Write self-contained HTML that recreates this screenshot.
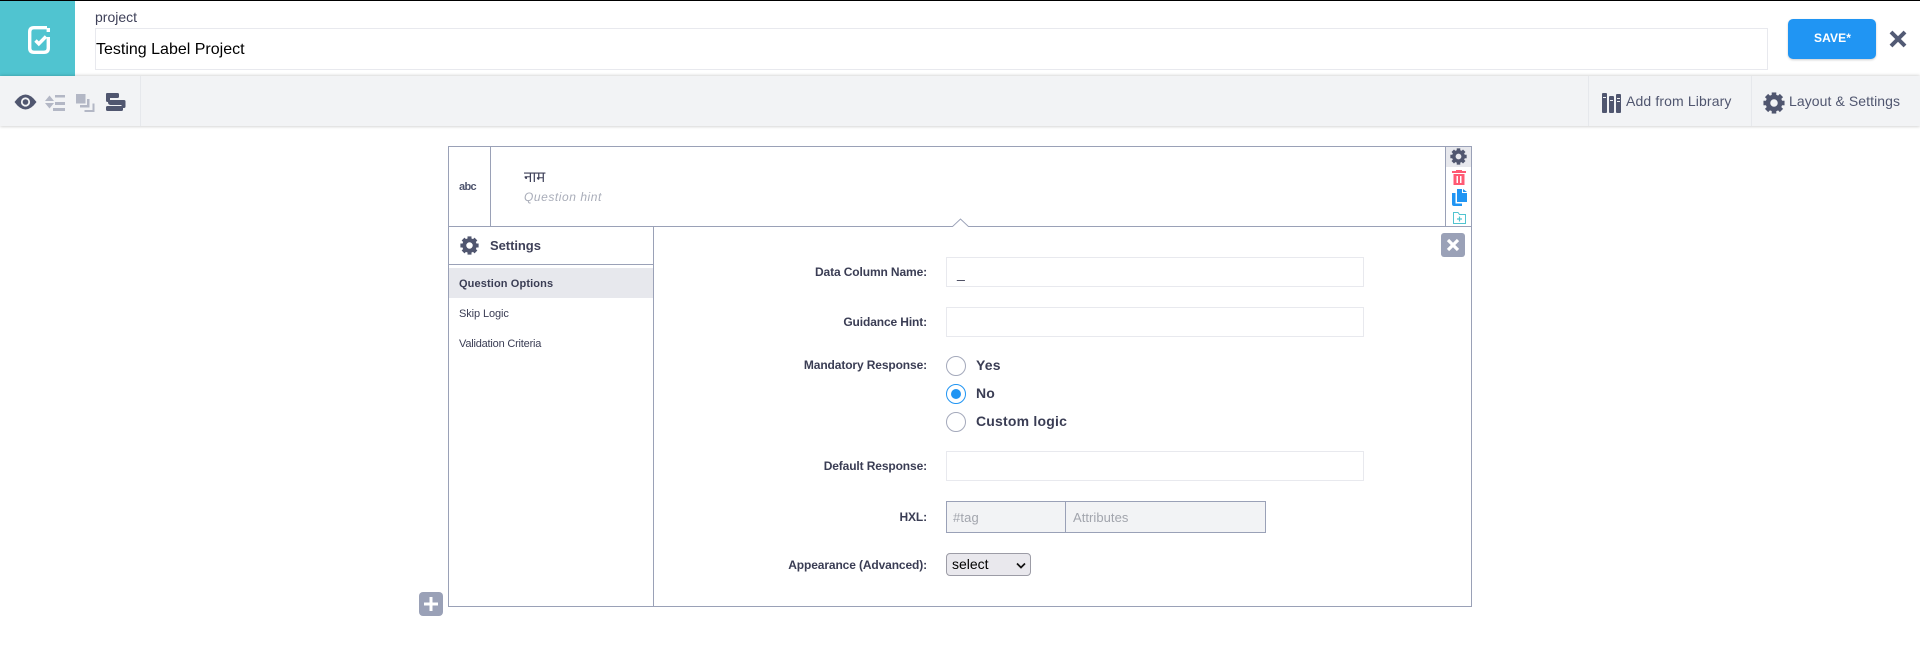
<!DOCTYPE html>
<html><head><meta charset="utf-8"><title>project</title>
<style>
html,body{margin:0;padding:0;background:#fff;width:1920px;height:653px;overflow:hidden;font-family:"Liberation Sans",Arial,sans-serif;color:#3d3f55}
.a{position:absolute;box-sizing:border-box}
.t{position:absolute;white-space:nowrap}
.lb{position:absolute;right:993px;text-align:right;font-size:12px;font-weight:bold;color:#3a3d54;white-space:nowrap;line-height:14px;letter-spacing:-.12px}
.in{position:absolute;left:946px;width:418px;height:30px;border:1px solid #e8e9ee;box-sizing:border-box;background:#fff}
.r{position:absolute;left:946px;width:20px;height:20px;border:1px solid #a4a9bb;border-radius:50%;box-sizing:border-box;background:#fff}
.rl{position:absolute;left:976px;font-size:14px;font-weight:bold;color:#3a3d54;line-height:16px;white-space:nowrap;letter-spacing:.2px}
svg{position:absolute;display:block}
</style></head><body>
<svg width="0" height="0" style="position:absolute"><defs>
<g id="gear"><circle cx="12" cy="12" r="6.6" fill="none" stroke="currentColor" stroke-width="5"/>
<g fill="currentColor"><rect x="9.5" y="0.5" width="5" height="4"/><rect x="9.5" y="19.5" width="5" height="4"/><rect x="0.5" y="9.5" width="4" height="5"/><rect x="19.5" y="9.5" width="4" height="5"/><rect x="9.5" y="0.5" width="5" height="4" transform="rotate(45 12 12)"/><rect x="9.5" y="19.5" width="5" height="4" transform="rotate(45 12 12)"/><rect x="0.5" y="9.5" width="4" height="5" transform="rotate(45 12 12)"/><rect x="19.5" y="9.5" width="4" height="5" transform="rotate(45 12 12)"/></g></g>
</defs></svg>

<div class="a" style="left:0;top:0;width:1920px;height:1px;background:#000"></div>
<div class="a" style="left:0;top:1px;width:75px;height:75px;background:#50c4d0"></div>
<svg style="left:27px;top:25px" width="24" height="30" viewBox="0 0 24 30" fill="none" stroke="#fff" stroke-width="3.4"><path d="M20 2.700H7Q2.700 2.700 2.700 7V23Q2.700 27.300 7 27.300H17Q21.300 27.300 21.300 23V12"/><path d="M21.300 3V7"/><path d="M8.500 15.500L11.800 18.800L19 11.500"/></svg>
<div class="t" style="left:95px;top:9px;font-size:14px;line-height:16px;color:#3f4159">project</div>
<div class="a" style="left:95px;top:28px;width:1673px;height:42px;border:1px solid #e8e9ee;background:#fff"></div>
<div class="t" style="left:96px;top:40px;font-size:16px;line-height:19px;color:#000">Testing Label Project</div>
<div class="a" style="left:1788px;top:19px;width:88px;height:40px;background:#2095f3;border-radius:5px;box-shadow:0 1px 2px rgba(0,0,0,.2);color:#fff;font-size:12px;font-weight:bold;text-align:center;line-height:38px;letter-spacing:.1px;padding-left:1px">SAVE*</div>
<svg style="left:1888px;top:29px" width="20" height="20" viewBox="0 0 20 20"><path d="M3 3L17 17M17 3L3 17" stroke="#525a74" stroke-width="4" fill="none"/></svg>

<div class="a" style="left:0;top:76px;width:1920px;height:50px;background:#f2f3f5;box-shadow:0 1px 3px rgba(0,0,0,.14),0 -1px 3px rgba(0,0,0,.12)"></div>
<div class="a" style="left:140px;top:76px;width:1px;height:50px;background:#e6e8ec"></div>
<div class="a" style="left:1588px;top:76px;width:1px;height:50px;background:#e6e8ec"></div>
<div class="a" style="left:1751px;top:76px;width:1px;height:50px;background:#e6e8ec"></div>
<svg style="left:14px;top:94px" width="23" height="16" viewBox="0 0 23 16"><path d="M0.5 8Q6 0.5 11.5 0.5T22.5 8Q17 15.5 11.5 15.5T0.5 8Z" fill="#50566f"/><circle cx="11.5" cy="8" r="4.6" fill="#f2f3f5"/><circle cx="11.5" cy="8" r="2.8" fill="#50566f"/></svg>
<svg style="left:45px;top:95px" width="21" height="16" viewBox="0 0 21 16" fill="#b3b7c5"><path d="M0 6L4.500 0.500L9 6Z"/><path d="M0 8L4.500 13.500L9 8Z"/><rect x="10" y="0" width="10" height="2.500"/><rect x="10" y="7" width="10" height="3"/><rect x="8" y="13" width="12" height="3"/></svg>
<svg style="left:76px;top:94px" width="19" height="18" viewBox="0 0 19 18" fill="#b3b7c5"><rect x="0" y="0" width="9.500" height="9.500"/><path d="M11 5H13.500V13.500H4V11H11Z"/><path d="M16.500 9.500H18.500V18H8.500V16H16.500Z"/></svg>
<svg style="left:105px;top:93px" width="21" height="19" viewBox="0 0 21 19" fill="#50566f"><rect x="1" y="0" width="13" height="5" rx="1.500"/><rect x="1" y="0" width="4" height="9" rx="1.500"/><rect x="3" y="7" width="17.500" height="5" rx="2.500"/><rect x="16.500" y="7" width="4" height="8" rx="1.500"/><rect x="1" y="13" width="17" height="5" rx="1.500"/></svg>

<svg style="left:1602px;top:93px" width="19" height="20" viewBox="0 0 19 20" fill="#50566f"><rect x="0" y="0" width="5" height="20" rx="1"/><rect x="7" y="3" width="5" height="17" rx="1"/><rect x="14" y="1" width="5" height="19" rx="1"/><g fill="#f2f3f5"><rect x="1" y="4" width="3" height="1"/><rect x="8" y="7" width="3" height="1"/><rect x="15" y="5" width="3" height="1"/><rect x="15" y="8" width="3" height="1"/></g></svg>
<div class="t" style="left:1626px;top:93px;font-size:14px;line-height:16px;color:#50566f;letter-spacing:.13px">Add from Library</div>
<svg style="left:1763px;top:92px;color:#50566f" width="22" height="22" viewBox="0 0 24 24"><use href="#gear"/></svg>
<div class="t" style="left:1789px;top:93px;font-size:14px;line-height:16px;color:#50566f;letter-spacing:.08px">Layout &amp; Settings</div>

<div class="a" style="left:448px;top:146px;width:1024px;height:461px;border:1px solid #9aa1b7;background:#fff"></div>
<div class="a" style="left:449px;top:226px;width:1022px;height:1px;background:#9aa1b7"></div>
<div class="a" style="left:490px;top:147px;width:1px;height:79px;background:#9aa1b7"></div>
<div class="a" style="left:1445px;top:147px;width:1px;height:79px;background:#9aa1b7"></div>
<div class="a" style="left:1446px;top:147px;width:25px;height:20px;background:#e7e8ed"></div>
<svg style="left:952px;top:218px" width="17" height="9" viewBox="0 0 17 9"><path d="M0 9L8.500 1L17 9" fill="#fff" stroke="#9aa1b7"/></svg>
<div class="t" style="left:459px;top:181px;font-size:11px;font-weight:bold;line-height:13px;color:#50566f;letter-spacing:-.65px">abc</div>
<div class="t" style="left:524px;top:169px;font-size:15px;line-height:17px;color:#3f4159;font-family:'Liberation Sans','Noto Sans Devanagari','Lohit Devanagari','FreeSans',sans-serif">नाम</div>
<div class="t" style="left:524px;top:190px;font-size:12px;font-style:italic;line-height:14px;color:#a9adb9;letter-spacing:.55px">Question hint</div>
<svg style="left:1450px;top:148px;color:#50566f" width="17" height="17" viewBox="0 0 24 24"><use href="#gear"/></svg>
<svg style="left:1452px;top:170px" width="14" height="15" viewBox="0 0 14 15" fill="#ff5a73"><rect x="0" y="1" width="14" height="2"/><rect x="4" y="0" width="6" height="1"/><path d="M1.500 4H12.500V15H1.500ZM4.500 6V13H6V6ZM8 6V13H9.500V6Z" fill-rule="evenodd"/></svg>
<svg style="left:1452px;top:189px" width="15" height="17" viewBox="0 0 15 17" fill="#2095f3"><path d="M5 0H10V4H15V13H5Z"/><path d="M11 0L15 3H11Z"/><path d="M0 4H3.500V14.500H10V17H2Q0 17 0 15Z"/></svg>
<svg style="left:1453px;top:212px" width="13" height="12" viewBox="0 0 13 12" fill="none" stroke="#50c4d0"><path d="M.5 11.500V.500H5L6.500 2.500H12.500V11.500Z"/><path d="M6.500 4.500V9.500M4 7H9" stroke-width="1.200"/></svg>

<div class="a" style="left:653px;top:227px;width:1px;height:379px;background:#9aa1b7"></div>
<svg style="left:460px;top:236px;color:#50566f" width="19" height="19" viewBox="0 0 24 24"><use href="#gear"/></svg>
<div class="t" style="left:490px;top:238px;font-size:13px;font-weight:bold;line-height:15px;color:#3f4159;letter-spacing:-.05px">Settings</div>
<div class="a" style="left:449px;top:264px;width:204px;height:1px;background:#9aa1b7"></div>
<div class="a" style="left:449px;top:268px;width:204px;height:30px;background:#e7e8ed"></div>
<div class="t" style="left:459px;top:277.500px;font-size:11px;font-weight:bold;line-height:13px;color:#3a3d54;letter-spacing:.12px">Question Options</div>
<div class="t" style="left:459px;top:307.500px;font-size:11px;line-height:13px;color:#3a3d54;letter-spacing:-.1px">Skip Logic</div>
<div class="t" style="left:459px;top:337.500px;font-size:11px;line-height:13px;color:#3a3d54;letter-spacing:-.2px">Validation Criteria</div>
<div class="a" style="left:1441px;top:233px;width:24px;height:24px;background:#9aa1b7;border-radius:3px"></div>
<svg style="left:1445px;top:237px" width="16" height="16" viewBox="0 0 16 16"><path d="M3 3L13 13M13 3L3 13" stroke="#fff" stroke-width="3.200"/></svg>

<div class="lb" style="top:264.500px">Data Column Name:</div>
<div class="in" style="top:257px"></div>
<div class="t" style="left:957px;top:265px;font-size:14px;line-height:16px;color:#3a3d54">_</div>
<div class="lb" style="top:314.500px">Guidance Hint:</div>
<div class="in" style="top:307px"></div>
<div class="lb" style="top:358px">Mandatory Response:</div>
<div class="r" style="top:356px"></div><div class="rl" style="top:357px">Yes</div>
<div class="r" style="top:384px;border-color:#2095f3"></div><div class="a" style="left:951px;top:389px;width:10px;height:10px;border-radius:50%;background:#2095f3"></div><div class="rl" style="top:384.500px">No</div>
<div class="r" style="top:412px"></div><div class="rl" style="top:412.500px">Custom logic</div>
<div class="lb" style="top:459px">Default Response:</div>
<div class="in" style="top:451px"></div>
<div class="lb" style="top:510px">HXL:</div>
<div class="a" style="left:946px;top:501px;width:320px;height:32px;background:#f2f3f5;border:1px solid #9aa1b7"></div>
<div class="a" style="left:1065px;top:501px;width:1px;height:32px;background:#9aa1b7"></div>
<div class="t" style="left:953px;top:510px;font-size:13px;line-height:16px;color:#a2a5ad;letter-spacing:.15px">#tag</div>
<div class="t" style="left:1073px;top:510px;font-size:13px;line-height:16px;color:#a2a5ad;letter-spacing:.05px">Attributes</div>
<div class="lb" style="top:558px">Appearance (Advanced):</div>
<div class="a" style="left:946px;top:553px;width:85px;height:23px;background:#e9e8ed;border:1px solid #9c9ca6;border-radius:4px"></div>
<div class="t" style="left:952px;top:556px;font-size:14px;line-height:16px;color:#000">select</div>
<svg style="left:1016px;top:562px" width="10" height="7" viewBox="0 0 10 7"><path d="M1 1.500L5 5.500L9 1.500" fill="none" stroke="#111" stroke-width="1.700"/></svg>

<div class="a" style="left:419px;top:592px;width:24px;height:24px;background:#9aa1b7;border-radius:4px"></div>
<svg style="left:423px;top:596px" width="16" height="16" viewBox="0 0 16 16"><path d="M8 1V15M1 8H15" stroke="#fff" stroke-width="3"/></svg>
</body></html>
